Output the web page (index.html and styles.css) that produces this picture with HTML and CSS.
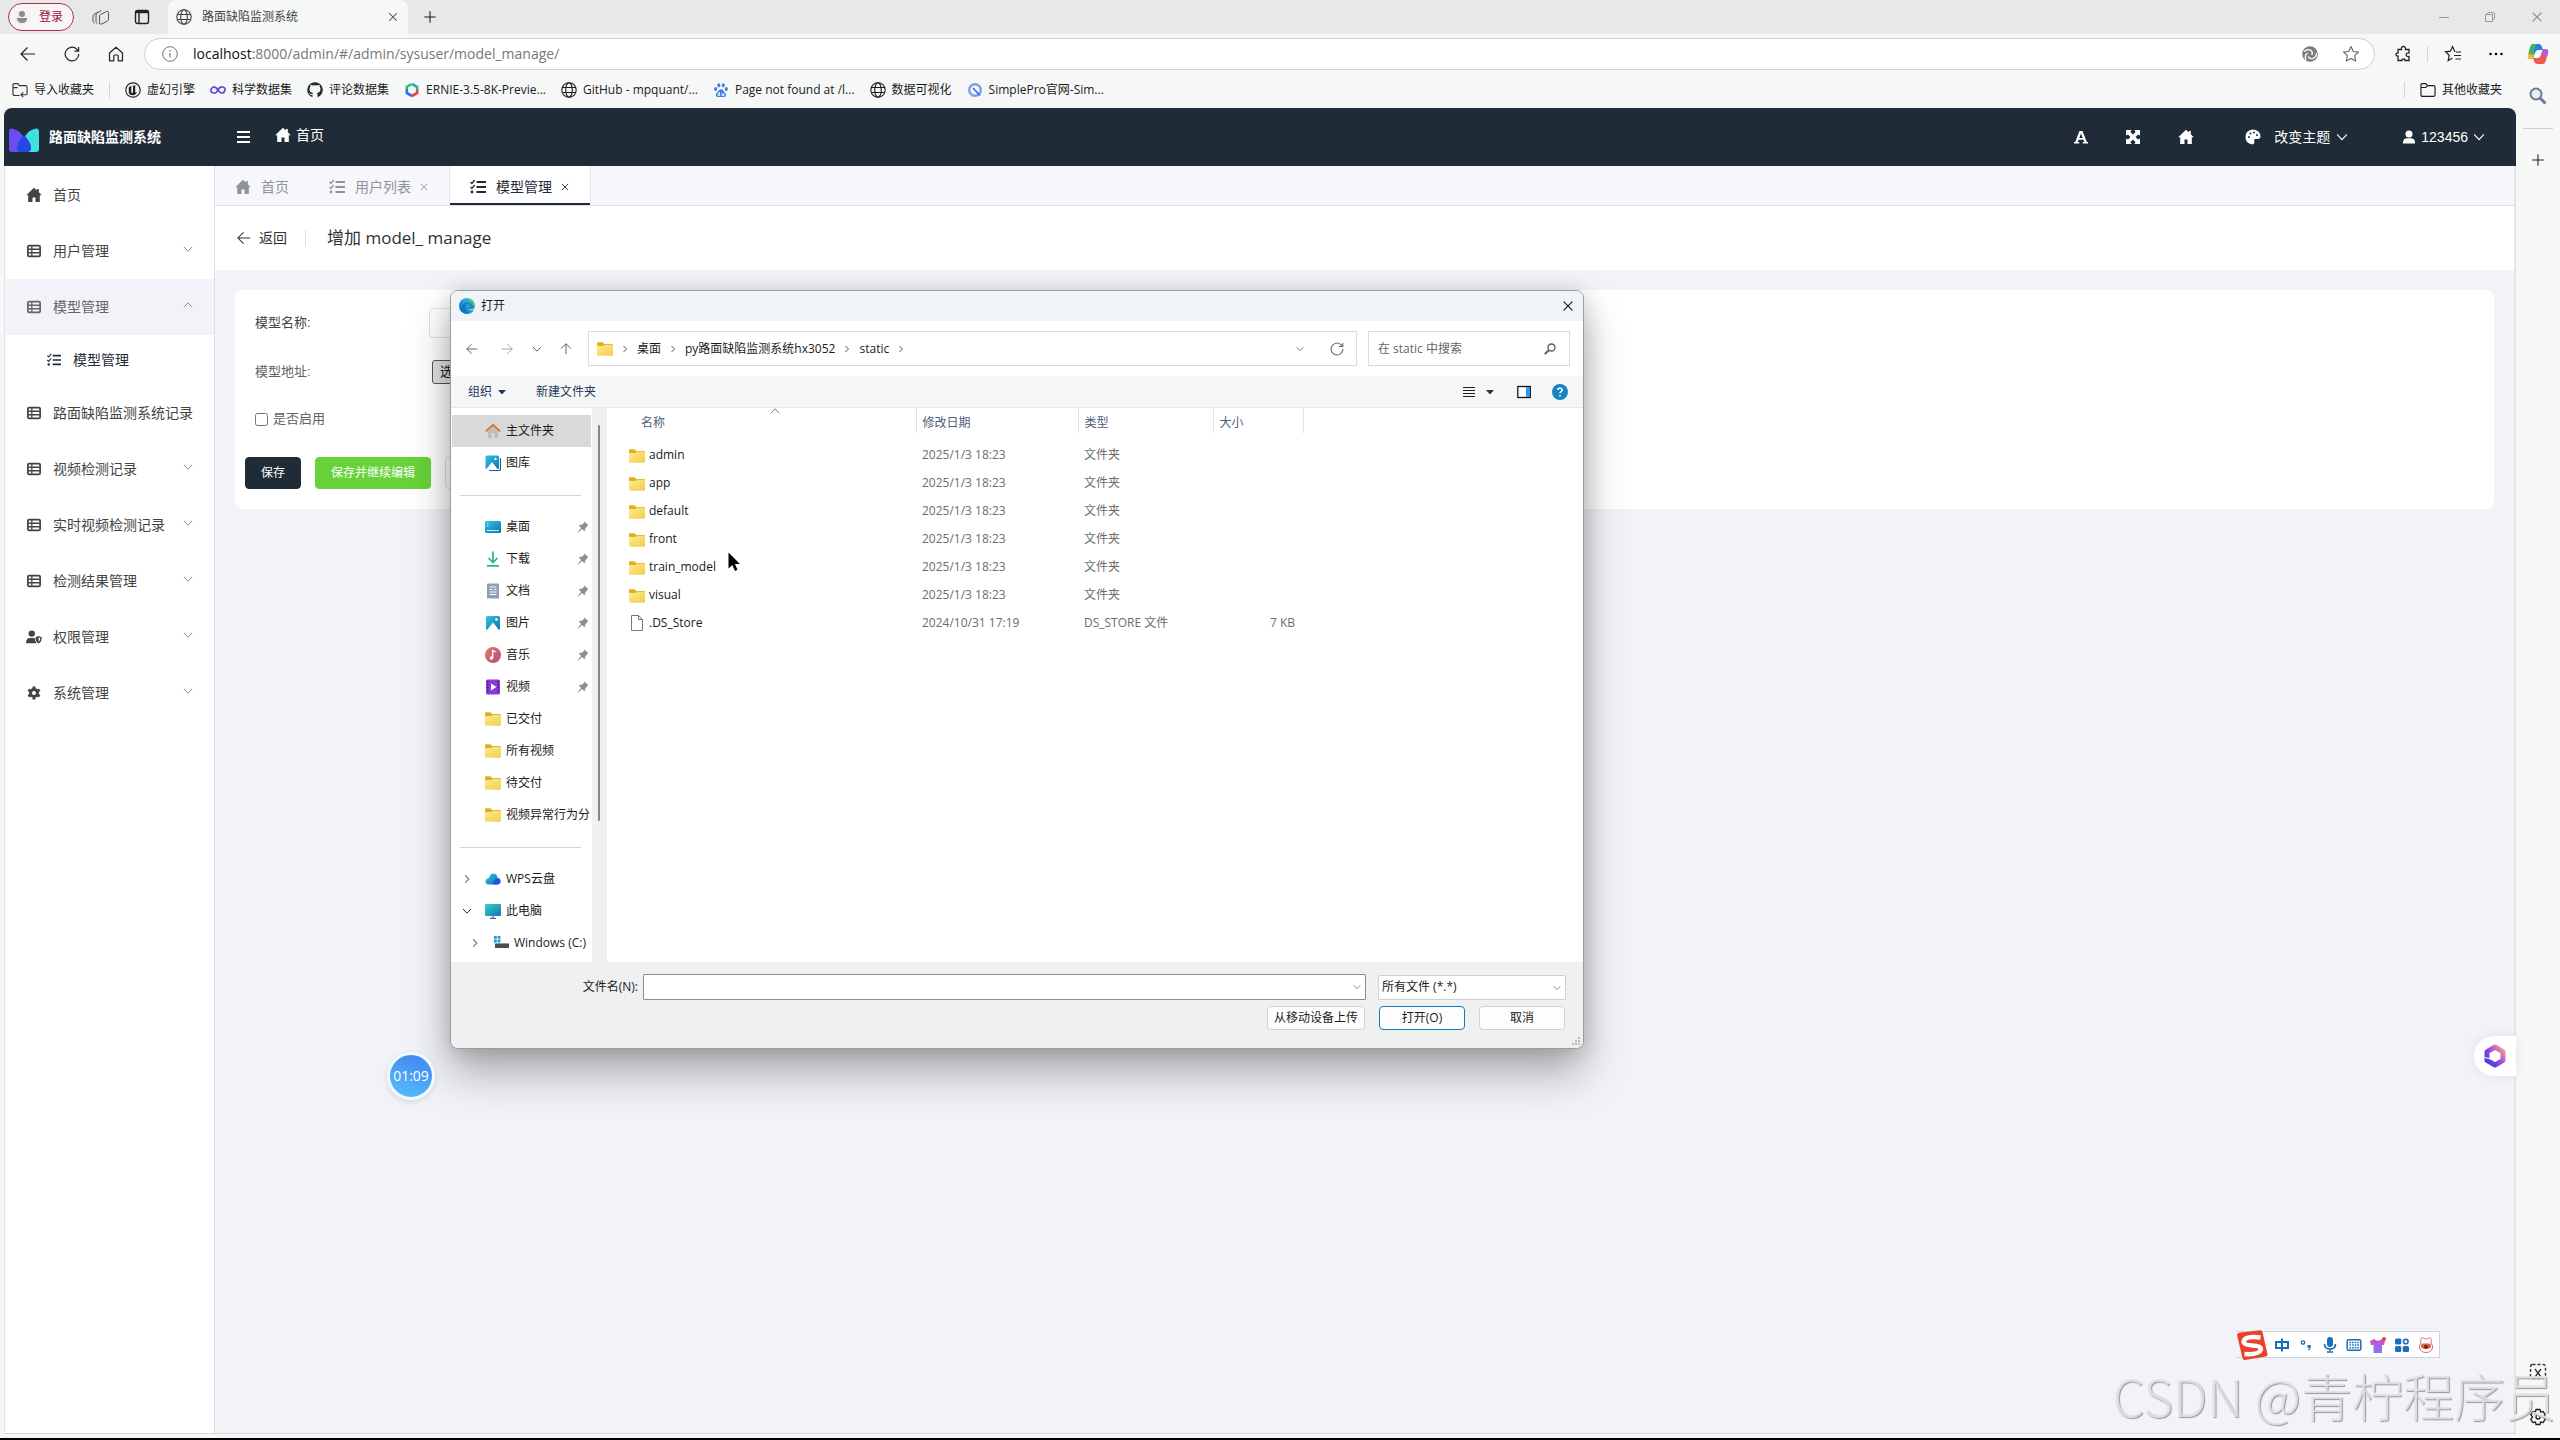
FILE: index.html
```html
<!DOCTYPE html>
<html lang="zh-CN">
<head>
<meta charset="utf-8">
<title>路面缺陷监测系统</title>
<link rel="stylesheet" href="styles.css">
</head>
<body>
<svg class="sprite" width="0" height="0" aria-hidden="true">
  <defs>
    <linearGradient id="g-folder" x1="0" y1="0" x2="1" y2="1"><stop offset="0" stop-color="#ffe994"/><stop offset="1" stop-color="#f3cf45"/></linearGradient>
    <linearGradient id="g-blue" x1="0" y1="0" x2="1" y2="1"><stop offset="0" stop-color="#2fc3e8"/><stop offset="1" stop-color="#1173a8"/></linearGradient>
    <linearGradient id="g-music" x1="0" y1="0" x2="1" y2="1"><stop offset="0" stop-color="#e08070"/><stop offset="1" stop-color="#b04a78"/></linearGradient>
    <linearGradient id="g-edge" x1="0" y1="1" x2="1" y2="0"><stop offset="0" stop-color="#0c59a4"/><stop offset=".5" stop-color="#1b9de2"/><stop offset="1" stop-color="#5fe06a"/></linearGradient>
    <linearGradient id="g-hex" x1="0" y1="1" x2="1" y2="0"><stop offset="0" stop-color="#3a35e8"/><stop offset=".5" stop-color="#9a4be0"/><stop offset="1" stop-color="#ffa08a"/></linearGradient>
    <linearGradient id="g-screen" x1="0" y1="0" x2="1" y2="1"><stop offset="0" stop-color="#36d0c6"/><stop offset="1" stop-color="#1277b5"/></linearGradient>
    <linearGradient id="g-shirt" x1="0" y1="0" x2="0" y2="1"><stop offset="0" stop-color="#d04fc0"/><stop offset="1" stop-color="#7d7bff"/></linearGradient>
  </defs>
  <symbol id="globe" viewBox="0 0 16 16"><g fill="none" stroke="currentColor" stroke-width="1.1"><circle cx="8" cy="8" r="7.2"/><ellipse cx="8" cy="8" rx="3.3" ry="7.2"/><path d="M1.5 5.5h13M1.5 10.5h13"/></g></symbol>
  <symbol id="x" viewBox="0 0 16 16"><path d="M3 3l10 10M13 3L3 13" fill="none" stroke="currentColor" stroke-width="1.4"/></symbol>
  <symbol id="plus" viewBox="0 0 16 16"><path d="M8 1.500v13M1.500 8h13" fill="none" stroke="currentColor" stroke-width="1.200"/></symbol>
  <symbol id="left" viewBox="0 0 16 16"><path d="M15 8H1M7.500 1.500L1 8l6.500 6.500" fill="none" stroke="currentColor" stroke-width="1.200"/></symbol>
  <symbol id="right" viewBox="0 0 16 16"><path d="M1 8h14M8.500 1.500L15 8l-6.500 6.500" fill="none" stroke="currentColor" stroke-width="1.200"/></symbol>
  <symbol id="up" viewBox="0 0 16 16"><path d="M8 15V1M1.500 7.500L8 1l6.500 6.500" fill="none" stroke="currentColor" stroke-width="1.200"/></symbol>
  <symbol id="down-chev" viewBox="0 0 16 16"><path d="M1.500 4.500L8 11.500l6.500-7" fill="none" stroke="currentColor" stroke-width="1.500"/></symbol>
  <symbol id="up-chev" viewBox="0 0 16 16"><path d="M1.500 11.500L8 4.500l6.500 7" fill="none" stroke="currentColor" stroke-width="1.500"/></symbol>
  <symbol id="right-chev" viewBox="0 0 16 16"><path d="M5 2l6 6-6 6" fill="none" stroke="currentColor" stroke-width="2"/></symbol>
  <symbol id="reload" viewBox="0 0 16 16"><path d="M14.800 8A6.800 6.800 0 1 1 12.500 2.900L14.500 5M14.600 1v4.200h-4.200" fill="none" stroke="currentColor" stroke-width="1.200"/></symbol>
  <symbol id="home-line" viewBox="0 0 16 16"><path d="M1.500 7L8 1.200 14.500 7v7.800h-4.300V10q0-1-1-1H6.800q-1 0-1 1v4.800H1.500z" fill="none" stroke="currentColor" stroke-width="1.200" stroke-linejoin="round"/></symbol>
  <symbol id="house" viewBox="0 0 16 16"><path d="M8 .8L.2 8.200h2V15h4.300v-4.500h3V15h4.300V8.200h2L12.800 5.200V2h-2v1.400z" fill="currentColor"/></symbol>
  <symbol id="table" viewBox="0 0 16 16"><rect x="1" y="1.800" width="14" height="12.400" rx="1.500" fill="none" stroke="currentColor" stroke-width="2"/><path d="M1 6h14M1 10h14M5.500 2v12" stroke="currentColor" stroke-width="1.500"/></symbol>
  <symbol id="tasks" viewBox="0 0 16 16"><path d="M6.500 3H16M6.500 8H16M6.500 13H16" stroke="currentColor" stroke-width="1.900"/><path d="M.4 3l1.500 1.500L4.700 1M.4 8l1.500 1.500L4.700 6" fill="none" stroke="currentColor" stroke-width="1.300"/><circle cx="2" cy="13" r="1.400" fill="currentColor"/></symbol>
  <symbol id="user" viewBox="0 0 16 16"><circle cx="8" cy="4.500" r="4" fill="currentColor"/><path d="M1 15.500q0-6 5-6h4q5 0 5 6z" fill="currentColor"/></symbol>
  <symbol id="user-shield" viewBox="0 0 18 16"><circle cx="6.500" cy="4.200" r="3.600" fill="currentColor"/><path d="M0 15q0-6 4.500-6h4l1.500.6q0 3 2 5.400zM14.200 6.800l3.600 1.400q.2 5-3.600 7.200-3.800-2.200-3.600-7.200zm0 1.700v5q2-1.500 2-4.300z" fill="currentColor" fill-rule="evenodd"/></symbol>
  <symbol id="gear" viewBox="0 0 16 16"><circle cx="8" cy="8" r="4" fill="none" stroke="currentColor" stroke-width="3.400"/><path d="M8 .5v2.500M8 13v2.500M1.500 4.200l2.200 1.300M12.300 10.500l2.200 1.300M1.500 11.800l2.200-1.300M12.300 5.500l2.200-1.300" stroke="currentColor" stroke-width="3.400"/></symbol>
  <symbol id="gear-line" viewBox="0 0 18 18"><path d="M7 1.500h4l.6 2.600 2.400-.8 2.200 3.300-1.700 2.400 1.700 2.400-2.200 3.300-2.400-.8-.6 2.600H7l-.6-2.600-2.400.8-2.200-3.300L3.500 9 1.800 6.600 4 3.300l2.400.8z" fill="none" stroke="currentColor" stroke-width="1.300" stroke-linejoin="round"/><circle cx="9" cy="9" r="2" fill="none" stroke="currentColor" stroke-width="1.300"/></symbol>
  <symbol id="folder" viewBox="0 0 16 14"><path d="M0 1.200Q0 .2 1 .2h4.500L7.200 2H15q1 0 1 1v2H0z" fill="#dfb021"/><path d="M0 4h6.500l1.200-1.200H15q1 0 1 1V12.800q0 1-1 1H1q-1 0-1-1z" fill="url(#g-folder)"/></symbol>
  <symbol id="folder-line" viewBox="0 0 17 16"><path d="M1 3q0-1.800 1.800-1.800h3.400L8 3.400h6.200Q16 3.400 16 5.200V13q0 1.800-1.800 1.800H2.800Q1 14.800 1 13zM1 5.400h5L8 3.400" fill="none" stroke="currentColor" stroke-width="1.200"/></symbol>
  <symbol id="pin" viewBox="0 0 12 12"><path d="M7.500.5l4 4-1.200.4-2 2.400q.2 1.900-.9 3L5 7.900 1 11.500.5 11 4.100 7 1.700 4.600q1.100-1.100 3-.9l2.400-2z" fill="#8c8f94"/></symbol>
  <symbol id="picture" viewBox="0 0 16 16"><rect x="1" y="1" width="14" height="14" rx="1.500" fill="url(#g-blue)"/><path d="M2 15l6-7.500L14 15z" fill="#fff"/><circle cx="11.500" cy="4.500" r="1.300" fill="#fff"/></symbol>
  <symbol id="caret" viewBox="0 0 8 8"><path d="M0 2h8L4 6.500z" fill="currentColor"/></symbol>
  <symbol id="star" viewBox="0 0 18 18"><path d="M9 1.500l2.300 5 5.200.6-3.900 3.600 1.100 5.300L9 13.400 4.300 16l1.100-5.300L1.500 7.100l5.200-.6z" fill="none" stroke="currentColor" stroke-width="1.100" stroke-linejoin="round"/></symbol>
</svg>

<div class="browser">
  <header class="strip">
    <button class="login"><svg class="i16" viewBox="0 0 16 16"><circle cx="8" cy="8" r="8" fill="#f1f1f1"/><circle cx="8" cy="5" r="3" fill="#8b8b8b"/><path d="M3 9h10q0 5-5 5T3 9z" fill="#8b8b8b"/></svg>登录</button>
    <svg class="i18 workspaces" viewBox="0 0 18 18"><path d="M6 4L2.500 6Q1 6.800 1 8v5q0 1.500 1.500 2.300M9.500 2.500L5.500 4.700Q4 5.500 4 7v6.500q0 1.500 1.500 2.300" fill="none" stroke="#555"/><path d="M8.500 6.500l6-3q2-.6 2 1.200v6.500q0 1.300-1.200 2L9.700 16q-2.200.8-2.200-1.200V8q0-1 1-1.500z" fill="none" stroke="#555"/></svg>
    <svg class="i16 tabs-icon" viewBox="0 0 16 16"><rect x="1.500" y="1.500" width="13" height="13" rx="2" fill="none" stroke="#222" stroke-width="1.400"/><path d="M1.500 3h13" stroke="#222" stroke-width="2.400"/><path d="M5 2v12" stroke="#222" stroke-width="1.400"/></svg>
    <div class="tab"><svg class="i16"><use href="#globe"/></svg><span class="tab-title">路面缺陷监测系统</span><button class="bare" aria-label="关闭标签页"><svg class="i12"><use href="#x"/></svg></button></div>
    <button class="bare new-tab" aria-label="新建标签页"><svg class="i14"><use href="#plus"/></svg></button>
    <div class="win-controls">
      <svg class="i12" viewBox="0 0 12 12"><path d="M1 6.500h10" stroke="#999"/></svg>
      <svg class="i12" viewBox="0 0 12 12"><path d="M3.500 3.500V3q0-1.500 1.500-1.500h4Q10.500 1.500 10.500 3v4q0 1.500-1.500 1.500M1.500 3.500h7v7h-7z" fill="none" stroke="#999"/></svg>
      <svg class="i14"><use href="#x"/></svg>
    </div>
  </header>

  <div class="under">
    <div class="column">
      <div class="toolbar">
        <button class="bare" aria-label="后退"><svg class="i16"><use href="#left"/></svg></button>
        <button class="bare" aria-label="刷新"><svg class="i16"><use href="#reload"/></svg></button>
        <button class="bare" aria-label="主页"><svg class="i16"><use href="#home-line"/></svg></button>
        <div class="address">
          <svg class="i16" viewBox="0 0 16 16"><circle cx="8" cy="8" r="7.300" fill="none" stroke="#777"/><path d="M8 7v4.500M8 4v1.500" stroke="#777" stroke-width="1.200"/></svg>
          <span class="url"><b>localhost</b>:8000/admin/#/admin/sysuser/model_manage/</span>
          <svg class="i16" viewBox="0 0 16 16"><circle cx="8" cy="8" r="7.800" fill="#7d7d7d"/><path d="M2 5.500q4-3 7-1 2.200 2 .8 4.500M14.500 7q0 4-3.500 5.500-3.500.8-4.800-2M4 14Q2 9 5.800 7" fill="none" stroke="#fff" stroke-width="1.300"/></svg>
          <svg class="i18"><use href="#star"/></svg>
        </div>
        <svg class="i18 ext" viewBox="0 0 18 18"><path d="M3 4.500h3.500q-.6-3 1.900-3t2 3H14V8q-2.800-.3-2.800 1.800T14 11.500v4H10q.3-1.500-1.500-1.500T7 15.500H3V11q-2 .3-2-1.500T3 8z" fill="none" stroke="#222" stroke-width="1.300"/></svg>
        <span class="divider"></span>
        <svg class="i18" viewBox="0 0 18 18"><path d="M11 7L8.500 1.500l-2 4.700-5 .6 3.700 3.400-1 5.300 4-2.300M12 7h5M10 10.500h7M11.500 14H17" fill="none" stroke="#222" stroke-width="1.200"/></svg>
        <svg class="i16 dots" viewBox="0 0 16 16"><circle cx="2.500" cy="8" r="1.300"/><circle cx="8" cy="8" r="1.300"/><circle cx="13.500" cy="8" r="1.300"/></svg>
      </div>

      <nav class="bookmarks" aria-label="收藏夹">
        <a href="#"><svg class="i16" viewBox="0 0 17 16"><path d="M8 13.800H2.800Q1 13.800 1 12V3q0-1.800 1.800-1.800h3.400L8 3.400h6.200Q16 3.400 16 5.200V13M6 5.500H1M9.500 13h6M12 10.500L9.500 13l2.500 2.500" fill="none" stroke="#333" stroke-width="1.200"/></svg>导入收藏夹</a>
        <span class="divider"></span>
        <a href="#"><svg class="i16" viewBox="0 0 16 16"><circle cx="8" cy="8" r="7.200" fill="none" stroke="#222" stroke-width="1.200"/><path d="M3 6.500Q4 4.500 7 3.500q-.7.800-.7 1.700v5.300q.8.800 1.700 0V5q0-.7-.5-1.200l3.300-.3q-.6.800-.6 1.700v5q.8.700 2-.7-1 3.500-4.200 3.800-3.300.2-4.200-2.300V6z" fill="#222"/></svg>虚幻引擎</a>
        <a href="#"><svg class="i16" viewBox="0 0 16 16"><path d="M8 8Q5.500 4.500 3.500 5T1 8t2.500 3T8 8t4.500-3T15 8t-2.500 3T8 8z" fill="none" stroke="#5a45d6" stroke-width="1.700"/></svg>科学数据集</a>
        <a href="#"><svg class="i16" viewBox="0 0 16 16"><path d="M8 .3a7.700 7.700 0 0 0-2.500 15V13q-2.200.5-2.700-1L2 10.800q1 0 1.700 1.100.8.700 1.900.3l.4-1.100Q2.500 10.500 2.500 7q0-1.200.9-2.200-.3-1 .1-2.100 1 0 2.200.9 2.300-.5 4.600 0 1.200-.9 2.200-.9.400 1.100.1 2.100.9 1 .9 2.200 0 3.500-3.500 4.100.5.500.5 1.500v2.700A7.700 7.700 0 0 0 8 .3z" fill="#24292f"/></svg>评论数据集</a>
        <a href="#"><svg class="i16" viewBox="0 0 16 16"><g fill="none" stroke-width="2.600"><path d="M2.800 7V5L7.500 2" stroke="#2fc25b"/><path d="M8 2l5.200 3v4" stroke="#2eb0a8"/><path d="M2.800 7v4L8 14" stroke="#2e6ff2"/><path d="M8 14l5.200-3V8" stroke="#f0413c"/></g></svg>ERNIE-3.5-8K-Previe...</a>
        <a href="#"><svg class="i16"><use href="#globe"/></svg>GitHub - mpquant/...</a>
        <a href="#"><svg class="i16" viewBox="0 0 16 16"><g fill="#3b82e8"><ellipse cx="2.700" cy="7" rx="1.600" ry="2"/><ellipse cx="5.800" cy="3.300" rx="1.500" ry="2.100"/><ellipse cx="10.200" cy="3.300" rx="1.500" ry="2.100"/><ellipse cx="13.300" cy="7" rx="1.600" ry="2"/><path d="M8 7q1.500 0 3 2.500l2 2.500q.8 3-2.500 3H5q-3-.3-2-3.200L5 9.500Q6.500 7 8 7z"/></g><path d="M6.500 10v3.500H5q-.8-1.500.5-2.200h1M9 11v2.500h2V11" fill="none" stroke="#fff" stroke-width=".9"/></svg>Page not found at /l...</a>
        <a href="#"><svg class="i16"><use href="#globe"/></svg>数据可视化</a>
        <a href="#"><svg class="i16" viewBox="0 0 16 16"><circle cx="8" cy="8" r="5.800" fill="none" stroke="#7f9cec" stroke-width="2.400"/><path d="M6 6l7 7.500" stroke="#3868e0" stroke-width="1.600"/></svg>SimplePro官网-Sim...</a>
        <span class="divider push"></span>
        <a href="#"><svg class="i16"><use href="#folder-line"/></svg>其他收藏夹</a>
      </nav>

      <div class="page">
        <header class="app-header">
          <div class="brand">
            <svg class="logo" viewBox="0 0 30 24"><path d="M0 3q0-3 3-2.500 10 2 12 11L11 24H3q-3 0-3-3z" fill="#6a4df0"/><path d="M30 3q0-3-3-2.500-10 2-12 11L19 24h8q3 0 3-3z" fill="#3fe0e0"/><path d="M15 7q7 7 7 13 0 4-4 4h-6q-4 0-4-4 0-6 7-13z" fill="#2348e6"/></svg>
            <strong>路面缺陷监测系统</strong>
          </div>
          <button class="bare" aria-label="折叠菜单"><svg class="i14" viewBox="0 0 14 14"><path d="M0 2h13M0 7h13M0 12h13" stroke="#fff" stroke-width="2.200"/></svg></button>
          <a class="crumb" href="#"><svg class="i16"><use href="#house"/></svg>首页</a>
          <div class="app-tools">
            <svg class="i14" viewBox="0 0 14 14"><path d="M0 13.500V12h1.200L5.500 1h3l4.300 11H14v1.500H8.800V12h1.400l-.8-2.200H4.600L3.800 12h1.400v1.500zM5.300 8h3.400L7 3.500z" fill="#fff" fill-rule="evenodd"/></svg>
            <svg class="i14" viewBox="0 0 14 14"><path d="M0 0h5.500L4.500 2 7 4.500 9.500 2l-1-2H14v5.500L12 4.500 9.500 7 12 9.500l2-1V14H8.500l1-2L7 9.500 4.500 12l1 2H0V8.500l2 1L4.500 7 2 4.500l-2 1z" fill="#fff"/></svg>
            <svg class="i16"><use href="#house"/></svg>
          </div>
          <button class="menu theme"><svg class="i16" viewBox="0 0 16 16"><path d="M8 .5Q15.500 1 15.500 8q-.2 2-3 2H10q-1.500.5-.7 2 .7 2.500-1.300 3.500Q.5 15 .5 8T8 .5z" fill="#fff"/><g fill="#1f2c37"><circle cx="4" cy="8" r="1"/><circle cx="5.500" cy="4.500" r="1"/><circle cx="9" cy="3.500" r="1"/><circle cx="12" cy="6" r="1"/></g></svg><span>改变主题</span><svg class="i12"><use href="#down-chev"/></svg></button>
          <button class="menu account"><svg class="i14"><use href="#user"/></svg><span>123456</span><svg class="i12"><use href="#down-chev"/></svg></button>
        </header>

        <div class="app-body">
          <nav class="side-menu" aria-label="主菜单">
            <a href="#"><svg class="i16"><use href="#house"/></svg><span>首页</span></a>
            <a href="#"><svg class="i14"><use href="#table"/></svg><span>用户管理</span><svg class="i10"><use href="#down-chev"/></svg></a>
            <a href="#" class="open"><svg class="i14"><use href="#table"/></svg><span>模型管理</span><svg class="i10"><use href="#up-chev"/></svg></a>
            <a href="#" class="sub"><svg class="i14"><use href="#tasks"/></svg><span>模型管理</span></a>
            <a href="#"><svg class="i14"><use href="#table"/></svg><span>路面缺陷监测系统记录</span></a>
            <a href="#"><svg class="i14"><use href="#table"/></svg><span>视频检测记录</span><svg class="i10"><use href="#down-chev"/></svg></a>
            <a href="#"><svg class="i14"><use href="#table"/></svg><span>实时视频检测记录</span><svg class="i10"><use href="#down-chev"/></svg></a>
            <a href="#"><svg class="i14"><use href="#table"/></svg><span>检测结果管理</span><svg class="i10"><use href="#down-chev"/></svg></a>
            <a href="#"><svg class="i16"><use href="#user-shield"/></svg><span>权限管理</span><svg class="i10"><use href="#down-chev"/></svg></a>
            <a href="#"><svg class="i14"><use href="#gear"/></svg><span>系统管理</span><svg class="i10"><use href="#down-chev"/></svg></a>
          </nav>

          <main class="content">
            <nav class="page-tabs" aria-label="已打开页面">
              <a href="#"><svg class="i16"><use href="#house"/></svg>首页</a>
              <a href="#"><svg class="i16"><use href="#tasks"/></svg>用户列表<svg class="i10"><use href="#x"/></svg></a>
              <a href="#" class="current"><svg class="i16"><use href="#tasks"/></svg>模型管理<svg class="i10"><use href="#x"/></svg></a>
            </nav>
            <div class="page-head">
              <a href="#"><svg class="i14"><use href="#left"/></svg>返回</a>
              <span class="divider"></span>
              <h1>增加 model_ manage</h1>
            </div>
            <form class="card">
              <div class="field"><label class="strong" for="model-name">模型名称:</label><input id="model-name" type="text"></div>
              <div class="field"><label for="model-file">模型地址:</label><button id="model-file" type="button" class="file-button">选择文件</button></div>
              <div class="field tick"><input id="enabled" type="checkbox"><label for="enabled">是否启用</label></div>
              <div class="actions">
                <button type="button" class="btn dark">保存</button>
                <button type="button" class="btn green">保存并继续编辑</button>
                <button type="button" class="btn more" aria-label="保存并增加另一个"></button>
              </div>
            </form>
          </main>
        </div>
      </div>
    </div>

    <aside class="edge-bar">
      <svg class="i22" viewBox="0 0 22 22"><path d="M6 1h6q2 0 3 3l1 3h-5q-2 0-3 3l-2 6H4q-4 0-3-4l2-7q1-4 3-4z" fill="#2a80e0"/><path d="M1 12l2-6q3 1 4 5l-1 5H4q-4 0-3-4z" fill="#f0c022"/><path d="M2.500 7Q3 1 7 1h2L6 12q-3 0-4-2z" fill="#3bb56a"/><path d="M16 21h-6q-2 0-3-3l-1-3h5q2 0 3-3l2-6h2q4 0 3 4l-2 7q-1 4-3 4z" fill="#ef5a50"/><path d="M14 12l2-6h2q4 0 3 4l-1 4q-3-2-6-2z" fill="#b45be0"/></svg>
      <svg class="i18" viewBox="0 0 18 18"><circle cx="7" cy="7" r="5.500" fill="#dff0fa" stroke="#777" stroke-width="2"/><path d="M11 11l5.500 5.500" stroke="#7b6fb5" stroke-width="3"/></svg>
      <span class="rule"></span>
      <svg class="i14"><use href="#plus"/></svg>
      <svg class="i18 push-down" viewBox="0 0 18 18"><rect x="1.500" y="1.500" width="15" height="14" rx="2" fill="none" stroke="#333" stroke-width="1.400" stroke-dasharray="3 2"/><path d="M6 6l6 8M12 6l-6 8" stroke="#333" stroke-width="1.300"/></svg>
      <svg class="i18"><use href="#gear-line"/></svg>
    </aside>
  </div>
</div>

<section class="dialog" role="dialog" aria-label="打开">
  <header class="dlg-title">
    <svg class="i16" viewBox="0 0 16 16"><circle cx="8" cy="8" r="8" fill="url(#g-edge)"/><path d="M6 9q0-3 3-3 2.500.5 2.500 2.500 0 1.500-1 2 3 .8 5-1Q14 6.500 12 5 7 3 4 6.500 2.500 11 7 14.500 5.500 12 6 9z" fill="#0b4c96" opacity=".4"/><path d="M9 10.500q2.500 2 6.300 0L16 8q0 2-1 3.500-4 2-6-1z" fill="#f0f5fa"/></svg>
    <span>打开</span>
    <button class="bare" aria-label="关闭"><svg class="i14"><use href="#x"/></svg></button>
  </header>
  <div class="dlg-nav">
    <svg class="i12"><use href="#left"/></svg>
    <svg class="i12 faint"><use href="#right"/></svg>
    <svg class="i10"><use href="#down-chev"/></svg>
    <svg class="i12"><use href="#up"/></svg>
    <div class="path">
      <svg class="i16 fold"><use href="#folder"/></svg>
      <svg class="i8"><use href="#right-chev"/></svg><span>桌面</span>
      <svg class="i8"><use href="#right-chev"/></svg><span>py路面缺陷监测系统hx3052</span>
      <svg class="i8"><use href="#right-chev"/></svg><span>static</span>
      <svg class="i8"><use href="#right-chev"/></svg>
      <svg class="i8 history"><use href="#down-chev"/></svg>
      <svg class="i14 refresh"><use href="#reload"/></svg>
    </div>
    <div class="search">
      <input type="text" aria-label="搜索" placeholder="在 static 中搜索">
      <svg class="i12" viewBox="0 0 12 12"><circle cx="7.500" cy="4.500" r="3.500" fill="none" stroke="#555" stroke-width="1.300"/><path d="M5 7L.8 11.200" stroke="#555" stroke-width="1.800"/></svg>
    </div>
  </div>
  <div class="dlg-tools">
    <button class="bare">组织<svg class="i8"><use href="#caret"/></svg></button>
    <button class="bare">新建文件夹</button>
    <span class="views">
      <svg class="i14" viewBox="0 0 14 14"><path d="M1 2.500h12M1 5.500h12M1 8.500h12M1 11.500h12" stroke="#222" stroke-width="1.200"/></svg>
      <svg class="i8"><use href="#caret"/></svg>
      <svg class="i14 pane" viewBox="0 0 14 14"><rect x=".8" y="1.500" width="12.500" height="11" fill="#fff" stroke="#111" stroke-width="1.300"/><path d="M9 2h4v10H9z" fill="#2a9be8"/></svg>
      <svg class="i16" viewBox="0 0 16 16"><circle cx="8" cy="8" r="8" fill="#1583c4"/><path d="M5.800 6q.2-2 2.200-2t2.200 1.800q0 1-1.200 1.800-1 .6-1 1.600M8 11v1.600" fill="none" stroke="#fff" stroke-width="1.600"/></svg>
    </span>
  </div>

  <div class="dlg-body">
    <ul class="tree">
      <li class="picked"><svg class="i16" viewBox="0 0 16 16"><path d="M3 8v7h3.500v-5h3v5H13V8L8 3z" fill="#bdbdbd"/><path d="M.8 8.500L8 1.800l7.200 6.700" fill="none" stroke="#d9762b" stroke-width="1.800"/></svg><span>主文件夹</span></li>
      <li><svg class="i16" viewBox="0 0 16 16"><path d="M4 15.500h10q1.500 0 1.500-1.500V3" fill="none" stroke="#0f5f8f" stroke-width="1.200"/><rect x=".5" y=".5" width="13.500" height="13.500" rx="1.500" fill="url(#g-blue)"/><path d="M1.500 14l5.500-7 5.500 7z" fill="#fff"/><circle cx="10.500" cy="4" r="1.200" fill="#fff"/></svg><span>图库</span></li>
      <li class="line"></li>
      <li><svg class="i16" viewBox="0 0 16 16"><rect y="2" width="16" height="12" rx="1.500" fill="url(#g-blue)"/><path d="M2 4.500h1.500M2 7h1.500M2 11.500h12" stroke="#bfeaf8" stroke-width="1"/></svg><span>桌面</span><svg class="i12"><use href="#pin"/></svg></li>
      <li><svg class="i16" viewBox="0 0 16 16"><path d="M8 .5V11M3.500 7L8 11.500 12.500 7M2 14.800h12" fill="none" stroke="#2bb389" stroke-width="1.700"/></svg><span>下载</span><svg class="i12"><use href="#pin"/></svg></li>
      <li><svg class="i16" viewBox="0 0 16 16"><rect x="2" y=".5" width="12" height="15" rx="1" fill="#8d9eb3"/><path d="M4.500 4h7M4.500 6.500h3M9 6.500h2.500M4.500 9h7M4.500 11.500h7" stroke="#fff" stroke-width="1.200"/></svg><span>文档</span><svg class="i12"><use href="#pin"/></svg></li>
      <li><svg class="i16"><use href="#picture"/></svg><span>图片</span><svg class="i12"><use href="#pin"/></svg></li>
      <li><svg class="i16" viewBox="0 0 16 16"><circle cx="8" cy="8" r="8" fill="url(#g-music)"/><circle cx="6.500" cy="11" r="1.800" fill="#fff"/><path d="M7.700 11V3.500l3 1.500" fill="none" stroke="#fff" stroke-width="1.300"/></svg><span>音乐</span><svg class="i12"><use href="#pin"/></svg></li>
      <li><svg class="i16" viewBox="0 0 16 16"><rect x="1" y=".5" width="14" height="15" rx="1.500" fill="#8a3ad8"/><path d="M2.800 2v12M13.200 2v12" stroke="#3c1378" stroke-width="1.500" stroke-dasharray="1.500 1.500"/><path d="M6 4.500L11.500 8 6 11.500z" fill="#fff"/></svg><span>视频</span><svg class="i12"><use href="#pin"/></svg></li>
      <li><svg class="i16 fold"><use href="#folder"/></svg><span>已交付</span></li>
      <li><svg class="i16 fold"><use href="#folder"/></svg><span>所有视频</span></li>
      <li><svg class="i16 fold"><use href="#folder"/></svg><span>待交付</span></li>
      <li><svg class="i16 fold"><use href="#folder"/></svg><span>视频异常行为分</span></li>
      <li class="line"></li>
      <li class="node"><svg class="i10 grey"><use href="#right-chev"/></svg><svg class="i16" viewBox="0 0 16 16"><path d="M4 13.500Q.5 13.500.5 10.500T4 7q1-4.500 4.500-4.500 4 .3 4 4.500 3 .5 3 3.300t-3 3.200z" fill="url(#g-blue)"/><path d="M8 13.500Q8.500 8 13 7q2.500.5 2.500 3.300t-3 3.200z" fill="#2156d8"/></svg><span>WPS云盘</span></li>
      <li class="node"><svg class="i10"><use href="#down-chev"/></svg><svg class="i16" viewBox="0 0 16 16"><rect y="1" width="16" height="12" rx="1" fill="url(#g-screen)"/><path d="M8 13v2M5 15.300h6" stroke="#567" stroke-width="1.200"/></svg><span>此电脑</span></li>
      <li class="node deep"><svg class="i10 grey"><use href="#right-chev"/></svg><svg class="i16" viewBox="0 0 16 16"><path d="M1 1h2.800v2.800H1zM4.600 1h2.800v2.800H4.600zM1 4.600h2.800v2.800H1zM4.600 4.600h2.800v2.800H4.600z" fill="#1b9bd8"/><path d="M2 9h14v4H2z" fill="#4a4f55"/><path d="M2 8.500h14" stroke="#999"/></svg><span>Windows (C:)</span></li>
    </ul>
    <div class="scroll"><div class="thumb"></div></div>
    <div class="files">
      <table>
        <colgroup><col class="c-name"><col class="c-date"><col class="c-type"><col class="c-size"><col></colgroup>
        <thead><tr><th>名称<svg class="i10 sort"><use href="#up-chev"/></svg></th><th>修改日期</th><th>类型</th><th>大小</th><th></th></tr></thead>
        <tbody>
          <tr><td><svg class="i16 fold"><use href="#folder"/></svg>admin</td><td>2025/1/3 18:23</td><td>文件夹</td><td></td><td></td></tr>
          <tr><td><svg class="i16 fold"><use href="#folder"/></svg>app</td><td>2025/1/3 18:23</td><td>文件夹</td><td></td><td></td></tr>
          <tr><td><svg class="i16 fold"><use href="#folder"/></svg>default</td><td>2025/1/3 18:23</td><td>文件夹</td><td></td><td></td></tr>
          <tr><td><svg class="i16 fold"><use href="#folder"/></svg>front</td><td>2025/1/3 18:23</td><td>文件夹</td><td></td><td></td></tr>
          <tr><td><svg class="i16 fold"><use href="#folder"/></svg>train_model</td><td>2025/1/3 18:23</td><td>文件夹</td><td></td><td></td></tr>
          <tr><td><svg class="i16 fold"><use href="#folder"/></svg>visual</td><td>2025/1/3 18:23</td><td>文件夹</td><td></td><td></td></tr>
          <tr><td><svg class="i16" viewBox="0 0 16 16"><path d="M2.500.5h7l4 4v11h-11zM9.500.5v4h4" fill="#fff" stroke="#777"/></svg>.DS_Store</td><td>2024/10/31 17:19</td><td>DS_STORE 文件</td><td>7 KB</td><td></td></tr>
        </tbody>
      </table>
    </div>
  </div>

  <footer class="dlg-foot">
    <div class="foot-row">
      <label for="file-name">文件名(N):</label>
      <span class="combo name"><input id="file-name" type="text"><svg class="i8"><use href="#down-chev"/></svg></span>
      <span class="combo kind"><select aria-label="文件类型"><option>所有文件 (*.*)</option></select><svg class="i8"><use href="#down-chev"/></svg></span>
    </div>
    <div class="foot-row buttons">
      <button class="mobile">从移动设备上传</button>
      <button class="primary">打开(O)</button>
      <button>取消</button>
    </div>
    <svg class="grip i8" viewBox="0 0 8 8"><path d="M6 0h2v2H6zM3 3h2v2H3zM6 3h2v2H6zM0 6h2v2H0zM3 6h2v2H3zM6 6h2v2H6z" fill="#bbb"/></svg>
  </footer>
</section>

<svg class="cursor" viewBox="0 0 12 20"><path d="M.5.500v16l3.800-3.500 2.700 6 2.500-1.200-2.600-5.800H12z" fill="#000"/></svg>
<div class="timer">01:09</div>
<div class="float-widget"><svg class="i24" viewBox="0 0 24 24"><path d="M12 3l8 4.600v8.800L12 21l-8-4.600V7.600z" fill="none" stroke="url(#g-hex)" stroke-width="5" stroke-linejoin="round"/><path d="M1.500 13.500l7 1.500" stroke="#fff"/></svg></div>
<div class="ime">
  <svg class="sogou" viewBox="0 0 32 30"><path d="M1 5q0-2 2-2.300L24 .3q2-.2 2.500 1.700L31.500 24q.3 2-1.500 2.500L9 30q-2 .2-2.500-2z" fill="#e8432a"/><path d="M24.500 7.500Q8 5.500 7.500 12q.5 3 9 3.500 8.500.2 8.500 4Q23 25 8.500 24" fill="none" stroke="#fff" stroke-width="4.500"/></svg>
  <svg class="i16" viewBox="0 0 16 16"><path d="M2 5h12v6H2zM8 1.500v13" fill="none" stroke="#1a6fb5" stroke-width="2"/></svg>
  <svg class="i16" viewBox="0 0 16 16"><circle cx="5" cy="5.500" r="1.700" fill="none" stroke="#1a6fb5" stroke-width="1.300"/><path d="M9.500 8h3.200v2.500q0 2.200-2.700 3v-1.300q1.200-.5 1.200-1.500H9.500z" fill="#1a6fb5"/></svg>
  <svg class="i16" viewBox="0 0 16 16"><rect x="5" y="0" width="6" height="10" rx="3" fill="#1a6fb5"/><path d="M2.500 7q0 5 5.500 5t5.500-5M8 12v2M5 15h6" fill="none" stroke="#1a6fb5" stroke-width="1.600"/></svg>
  <svg class="i16" viewBox="0 0 16 16"><rect x="1.200" y="2.700" width="13.600" height="10.600" rx="1.500" fill="#fff" stroke="#1a6fb5" stroke-width="1.500"/><path d="M3.500 5.500h9.500M3.500 8h9.500M3.500 10.700h9.500" stroke="#1a6fb5" stroke-width="1.500" stroke-dasharray="1.600 1"/></svg>
  <svg class="i16" viewBox="0 0 16 16"><path d="M0 4l4-2q4 3.500 8 0l3 2-1 4h-2v8H3.500V8H1z" fill="url(#g-shirt)"/><circle cx="14" cy="2" r="2" fill="#f0383c"/></svg>
  <svg class="i16" viewBox="0 0 16 16"><g fill="#1a6fb5"><rect x="1" y="1.500" width="6.300" height="6" rx="1.500"/><rect x="1" y="9" width="6.300" height="6" rx="1.500"/><rect x="8.700" y="9" width="6.300" height="6" rx="1.500"/></g><circle cx="11.800" cy="4.500" r="2.300" fill="none" stroke="#1a6fb5" stroke-width="1.600"/></svg>
  <svg class="i16" viewBox="0 0 16 16"><path d="M3 6Q2 1 4.500.7 7 2 8 2t3.500-1.300Q14 1 13 6q2 2 1.500 5-1.500 4.500-6.500 4.500T1.500 11Q1 8 3 6z" fill="#fff" stroke="#d86a78"/><rect x="3" y="6.500" width="10" height="5" rx="2" fill="#e0643a"/><ellipse cx="8" cy="10" rx="2.200" ry="2" fill="#7a1f1f"/></svg>
</div>
<div class="watermark">CSDN @青柠程序员</div>
</body>
</html>
```

FILE: styles.css
```css
* { box-sizing: border-box; }
html, body { height: 100%; }
body {
  margin: 0;
  overflow: hidden;
  font: 12px/16px "Open Sans", "Noto Sans CJK SC", sans-serif;
  color: #1b1b1b;
  background: #f6f8f7;
}
button, input, select { font: inherit; color: inherit; margin: 0; }
a { color: inherit; text-decoration: none; }
svg { flex: none; display: block; }
.sprite { position: absolute; }
.i8 { width: 8px; height: 8px; }
.i10 { width: 10px; height: 10px; }
.i12 { width: 12px; height: 12px; }
.i14 { width: 14px; height: 14px; }
.i16 { width: 16px; height: 16px; }
.i18 { width: 18px; height: 18px; }
.i22 { width: 22px; height: 22px; }
.i24 { width: 24px; height: 24px; }
.fold { height: 14px; }
.bare { border: 0; padding: 0; background: none; display: flex; align-items: center; gap: 6px; }
.divider { width: 1px; height: 16px; background: #d4d6d6; }

/* browser frame */
.browser { height: 100vh; display: flex; flex-direction: column; border-bottom: 2px solid #000; }
.strip { height: 34px; display: flex; align-items: center; padding-left: 8px; background: #e8e8e8; }
.login {
  display: flex; align-items: center; gap: 9px; width: 66px; height: 28px; padding: 0 5px;
  border: 1px solid #a8324f; border-radius: 14px; background: #f8f5f6; color: #a3123a;
}
.workspaces { margin-left: 18px; }
.tabs-icon { margin-left: 24px; }
.tab {
  display: flex; align-items: center; gap: 10px; width: 240px; height: 34px; margin-left: 18px; padding: 0 9px 0 8px;
  background: #f6f8f7; border-radius: 8px 8px 0 0; color: #444;
}
.tab-title { flex: 1; }
.new-tab { margin-left: 15px; }
.win-controls { display: flex; align-items: center; gap: 34px; margin-left: auto; padding-right: 16px; color: #888; }
.under { flex: 1; min-height: 0; display: flex; }
.column { flex: 1; min-width: 0; display: flex; flex-direction: column; }
.toolbar { height: 38px; display: flex; align-items: center; gap: 28px; padding: 2px 12px 0 20px; color: #222; }
.address {
  flex: 1; height: 32px; display: flex; align-items: center; gap: 15px; padding: 0 14px 0 17px; margin-left: -8px;
  border: 1px solid #cfd1d1; border-radius: 16px; background: #fff;
}
.url { flex: 1; font-size: 14px; color: #777; }
.url b { font-weight: 400; color: #111; }
.address .i18 { margin-left: 9px; color: #666; }
.ext { margin-left: -8px; margin-right: -14px; }
.toolbar > .divider { margin-right: -12px; }
.dots { margin-left: -2px; }
.bookmarks { height: 36px; display: flex; align-items: center; gap: 15px; padding: 0 14px 0 12px; }
.bookmarks a { display: flex; align-items: center; gap: 6px; white-space: nowrap; }
.push { margin-left: auto; }

.edge-bar { width: 44px; display: flex; flex-direction: column; align-items: center; padding: 9px 1px 12px 0; }
.edge-bar .i18 { margin-top: 22px; }
.rule { width: 30px; height: 1px; margin: 23px 0 24px; background: #d0d2d2; }
.edge-bar .push-down { margin-top: auto; }
.edge-bar .push-down + .i18 { margin-top: 27px; }

/* application */
.page {
  flex: 1; min-height: 0; display: flex; flex-direction: column; margin: 0 0 4px 4px; overflow: hidden;
  border-radius: 8px 8px 0 0; border-bottom: 1px solid #d5d7dc; background: #f2f3f8;
  font: 14px/20px "Liberation Sans", "Noto Sans CJK SC", sans-serif;
}
.app-header { height: 58px; flex: none; display: flex; align-items: center; padding-right: 31px; background: #1f2c37; color: #fff; }
.brand { display: flex; align-items: center; gap: 10px; width: 228px; padding-left: 5px; }
.logo { width: 30px; height: 24px; margin-top: 6px; }
.app-header .bare { margin-left: 5px; }
.crumb { display: flex; align-items: center; gap: 5px; margin-left: 24px; padding-bottom: 4px; }
.app-tools { display: flex; align-items: center; gap: 38px; margin-left: auto; }
.menu { display: flex; align-items: center; gap: 6px; border: 0; padding: 0; background: none; color: #fff; }
.theme { margin-left: 51px; }
.theme span { margin-left: 7px; }
.account { margin-left: 54px; gap: 5px; }
.app-body { flex: 1; min-height: 0; display: flex; }
.side-menu { width: 211px; flex: none; padding-top: 1px; background: #fff; border-left: 1px solid #e3e4e6; border-right: 1px solid #dfe1e6; color: #444; }
.side-menu a { display: grid; grid-template-columns: 16px 1fr 10px; align-items: center; column-gap: 11px; height: 56px; padding: 0 21px; white-space: nowrap; }
.side-menu a > svg:first-child { justify-self: center; }
.side-menu a > .i10 { justify-self: end; margin-bottom: 4px; color: #888; }
.side-menu .open { background: #f2f3f8; color: #666; }
.side-menu .sub { height: 50px; padding-left: 41px; color: #1f2c37; }
.content { flex: 1; min-width: 0; border-right: 2px solid #e3e5ea; }
.page-tabs { display: flex; height: 40px; background: #f6f7fb; border-bottom: 1px solid #dcdfe6; color: #909399; }
.page-tabs a { display: flex; align-items: center; gap: 10px; padding: 2px 20px 0; }
.page-tabs .i10 { margin-left: -2px; }
.page-tabs .current { background: #fff; color: #1f2c37; border: solid #e4e7ed; border-width: 0 1px; box-shadow: inset 0 -2px #1f2c37; }
.page-head { height: 64px; display: flex; align-items: center; padding-left: 22px; background: #fff; color: #303133; }
.page-head a { display: flex; align-items: center; gap: 8px; }
.page-head .divider { margin: 0 21px 0 18px; background: #dcdfe6; }
h1 { margin: 0; font: 400 17px/24px "Open Sans", "Noto Sans CJK SC", sans-serif; }
.card { margin: 20px; padding: 17px 10px 20px; border-radius: 8px; background: #fff; color: #606266; font-size: 13px; }
.field { display: flex; align-items: center; height: 32px; padding: 0 10px; margin-bottom: 17px; }
.field label { width: 174px; }
.field .strong { color: #444; }
.field input[type="text"] { width: 240px; height: 30px; border: 1px solid #dcdfe6; border-radius: 4px; }
.file-button { height: 24px; margin-left: 3px; padding: 0 7px; border: 1px solid #555; border-radius: 3px; background: #e4e4e4; color: #111; }
.tick { height: 28px; margin-bottom: 24px; }
.tick input { width: 13px; height: 13px; margin-right: 5px; }
.actions { display: flex; gap: 14px; }
.btn { height: 32px; padding: 0 15px; border: 1px solid #dcdfe6; border-radius: 4px; background: #fff; font-size: 12px; }
.dark { background: #1f2c37; border-color: #1f2c37; color: #fff; }
.green { background: #67d23a; border-color: #67d23a; color: #fff; }
.more { width: 128px; }

/* file dialog, a window floating over the page */
.dialog {
  position: absolute; left: 450px; top: 290px; width: 1134px; display: flex; flex-direction: column; overflow: hidden;
  border: 1px solid #9a9c9f; border-radius: 8px; background: #fff;
  box-shadow: 0 24px 44px rgba(0, 0, 0, .3), 0 2px 22px rgba(0, 0, 0, .15);
}
.dlg-title { height: 30px; display: flex; align-items: center; gap: 6px; padding: 0 8px; background: #f0f4f9; }
.dlg-title .bare { margin-left: auto; }
.dlg-nav { height: 55px; display: flex; align-items: center; padding: 0 13px 0 15px; color: #555; }
.dlg-nav > svg { margin-right: 23px; }
.dlg-nav > .i10 { margin-right: 18px; }
.dlg-nav > .i12 + .i10 { margin-left: -4px; }
.dlg-nav > .i10 + .i12 { margin-right: 16px; }
.faint { color: #999; }
.path { flex: 1; height: 35px; display: flex; align-items: center; gap: 8px; padding: 0 12px 0 8px; border: 1px solid #d9dbdc; color: #1b1b1b; }
.path > .i8 { color: #555; }
.path .history { margin-left: auto; }
.path .refresh { margin-left: 18px; color: #666; }
.search { width: 202px; height: 35px; display: flex; align-items: center; margin-left: 11px; padding: 0 13px 0 9px; border: 1px solid #d9dbdc; }
.search input { flex: 1; min-width: 0; border: 0; padding: 0; outline: 0; background: none; }
.search input::placeholder { color: #666; opacity: 1; }
.dlg-tools { height: 32px; display: flex; align-items: center; gap: 30px; padding: 1px 15px 0 17px; background: #f5f7f7; border-bottom: 1px solid #e6e8ea; color: #1e395b; }
.views { display: flex; align-items: center; gap: 10px; margin-left: auto; color: #333; }
.views .pane { margin: 0 11px 0 13px; }
.dlg-body { height: 554px; display: flex; }
.tree { width: 141px; margin: 0; padding: 7px 0 0; list-style: none; overflow: hidden; }
.tree li { display: flex; align-items: center; gap: 5px; height: 32px; margin: 0 1px; padding: 0 2px 0 33px; white-space: nowrap; }
.tree li > .i12 { margin-left: auto; }
.tree .picked { background: #d9d9d9; }
.tree .line { padding: 0 10px 0 8px; }
.tree .line::before { content: ""; flex: 1; height: 1px; background: #d5d5d5; }
.tree .node { padding-left: 10px; }
.tree .node > .i10 { margin-right: 8px; }
.tree .deep { padding-left: 18px; }
.grey { color: #888; }
.scroll { width: 15px; padding: 17px 7px 0 6px; background: #eff0f0; }
.thumb { height: 396px; border-radius: 1px; background: #858585; }
.files { flex: 1; padding-left: 22px; }
table { width: 100%; border-collapse: collapse; table-layout: fixed; }
.c-name { width: 287px; }
.c-date { width: 162px; }
.c-type { width: 135px; }
.c-size { width: 90px; }
th { height: 25px; padding: 4px 6px 0; border-right: 1px solid #dfe1e3; font-weight: 400; text-align: left; color: #4c607a; position: relative; }
th:first-child { padding-left: 12px; }
th:last-child { border: 0; }
.sort { position: absolute; left: 141px; top: -2px; color: #777; }
tbody::before { content: ""; display: block; height: 8px; }
td { height: 28px; padding: 0 8px 0 6px; color: #6d6d6d; white-space: nowrap; }
td:first-child { padding: 0; color: #191919; }
td:nth-child(4) { text-align: right; }
td svg { display: inline-block; vertical-align: middle; margin-right: 4px; }
.dlg-foot { position: relative; height: 86px; padding: 12px 17px 0; background: #eff0f0; }
.foot-row { display: flex; align-items: center; justify-content: flex-end; }
.combo { position: relative; display: flex; }
.combo svg { position: absolute; right: 5px; top: 9px; color: #666; pointer-events: none; }
.combo input { width: 100%; height: 26px; border: 1px solid #8a8c8e; border-radius: 1px; background: #fff; }
.combo select { width: 100%; height: 25px; padding: 0 3px; appearance: none; border: 1px solid #cdd0d2; border-radius: 2px; background: #fff; }
.name { width: 723px; margin: 0 12px 0 5px; }
.kind { width: 188px; }
.buttons { gap: 14px; margin-top: 6px; padding-right: 1px; }
.buttons button { width: 86px; height: 24px; padding: 0; border: 1px solid #d0d2d2; border-radius: 4px; background: #fdfdfd; }
.buttons .mobile { width: 98px; }
.buttons .primary { border-color: #1a78b8; }
.grip { position: absolute; right: 3px; bottom: 3px; }

/* overlays on the desktop */
.cursor { position: absolute; left: 728px; top: 552px; width: 12px; height: 20px; }
.timer {
  position: absolute; left: 387px; top: 1052px; width: 48px; height: 48px; border: 3px solid #eefaff; border-radius: 50%;
  background: linear-gradient(20deg, #58c0fb, #3f83ee); color: #fff; font-size: 14px; line-height: 42px; text-align: center;
  box-shadow: 0 2px 6px rgba(0, 0, 0, .12);
}
.float-widget {
  position: absolute; right: 44px; top: 1036px; width: 42px; height: 40px; display: flex; align-items: center; justify-content: center;
  border-radius: 20px 0 0 20px; background: #fff; box-shadow: 0 0 12px rgba(0, 0, 0, .08);
}
.ime {
  position: absolute; right: 120px; bottom: 82px; height: 27px; display: flex; align-items: center; gap: 8px; padding-right: 5px;
  background: linear-gradient(#fff, #fff) 16px 0 no-repeat; border: solid #d0d4da; border-width: 1px 1px 1px 0;
}
.sogou { width: 32px; height: 30px; margin-right: -2px; }
.watermark {
  position: absolute; right: 4px; bottom: 5px; font: 300 51px/80px "Noto Sans CJK SC", sans-serif; white-space: nowrap;
  color: rgba(225, 226, 230, .9); text-shadow: 1px 1px 1px #9a9a9a; pointer-events: none;
}
```
